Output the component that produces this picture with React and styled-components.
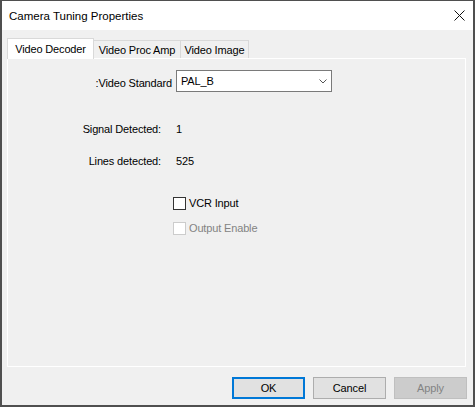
import React from 'react';
import styled, { createGlobalStyle } from 'styled-components';

const Global = createGlobalStyle`
  html, body { margin: 0; padding: 0; background: #4f4f4f; }
  body { width: 475px; height: 407px; overflow: hidden; }
  #root { width: 475px; height: 407px; }
`;

const Screen = styled.div`
  width: 475px;
  height: 407px;
  box-sizing: border-box;
  padding: 1px 2px 2px 2px;
  background: #4f4f4f;
  font-family: "Liberation Sans", Arial, sans-serif;
  font-size: 11px;
  letter-spacing: -0.15px;
  color: #000;
`;

const Window = styled.div`
  width: 471px;
  height: 404px;
  background: #f0f0f0;
  display: flex;
  flex-direction: column;
`;

const TitleBar = styled.div`
  height: 29px;
  flex-shrink: 0;
  background: #fff;
  display: flex;
  align-items: center;
  justify-content: space-between;
  padding: 0 8px 0 7px;
`;

const Title = styled.span`
  font-size: 11.5px;
  letter-spacing: 0;
  line-height: 14px;
`;

const CloseIcon = styled.svg`
  display: block;
  width: 11px;
  height: 11px;
`;

const Body = styled.div`
  flex: 1;
  display: flex;
  flex-direction: column;
  padding: 8px 7px 0 5px;
`;

const TabStrip = styled.div`
  display: flex;
  align-items: flex-end;
  height: 20px;
`;

const Tab = styled.div`
  box-sizing: border-box;
  width: ${p => p.$w}px;
  height: ${p => (p.$active ? 21 : 18)}px;
  margin-bottom: ${p => (p.$active ? -1 : 0)}px;
  margin-left: ${p => (p.$first ? 0 : -1)}px;
  padding-top: ${p => (p.$active ? 0 : 1)}px;
  background: ${p => (p.$active ? '#ffffff' : '#f0f0f0')};
  border: 1px solid #d9d9d9;
  border-bottom: none;
  display: flex;
  align-items: center;
  justify-content: center;
  line-height: 14px;
  white-space: nowrap;
  position: relative;
  z-index: ${p => (p.$active ? 2 : 1)};
`;

const Panel = styled.div`
  box-sizing: border-box;
  width: 459px;
  height: 309px;
  border: 1px solid #ffffff;
  background: #f0f0f0;
  padding-top: 11px;
  display: flex;
  flex-direction: column;
`;

const Row = styled.div`
  display: flex;
  align-items: flex-start;
  margin-top: ${p => p.$mt || 0}px;
`;

const Label = styled.div`
  box-sizing: border-box;
  width: ${p => p.$w}px;
  text-align: right;
  line-height: 14px;
  margin-top: ${p => p.$mt || 0}px;
  white-space: nowrap;
`;

const Value = styled.div`
  margin-left: ${p => p.$ml}px;
  line-height: 14px;
`;

const Combo = styled.div`
  box-sizing: border-box;
  margin-left: 4px;
  width: 156px;
  height: 22px;
  border: 1px solid #7a7a7a;
  background: #ffffff;
  display: flex;
  align-items: center;
  justify-content: space-between;
  padding: 0 4px 0 4px;
  line-height: 14px;
`;

const Chevron = styled.svg`
  display: block;
  width: 8px;
  height: 5px;
`;

const CheckRow = styled.label`
  display: flex;
  align-items: center;
  height: 13px;
  margin-left: 165px;
  margin-top: ${p => p.$mt}px;
  color: ${p => (p.$disabled ? '#838383' : '#000')};
  line-height: 13px;
`;

const Box = styled.span`
  box-sizing: border-box;
  width: 13px;
  height: 13px;
  border: 1px solid ${p => (p.$disabled ? '#cccccc' : '#333333')};
  background: #ffffff;
  margin-right: 3px;
  flex-shrink: 0;
`;

const ButtonRow = styled.div`
  display: flex;
  justify-content: flex-end;
  gap: 8px;
  margin-top: 10px;
  margin-right: -1px;
`;

const Button = styled.div`
  box-sizing: border-box;
  width: 73px;
  height: 22px;
  display: flex;
  align-items: center;
  justify-content: center;
  line-height: 14px;
  background: ${p => (p.$disabled ? '#cccccc' : '#e1e1e1')};
  border: ${p => (p.$default ? '2px solid #0078d7' : p.$disabled ? '1px solid #bfbfbf' : '1px solid #adadad')};
  color: ${p => (p.$disabled ? '#838383' : '#000')};
`;

export default function App() {
  return (
    <>
      <Global />
      <Screen>
        <Window>
          <TitleBar>
            <Title>Camera Tuning Properties</Title>
            <CloseIcon viewBox="0 0 11 11">
              <path d="M0.5 0.5 L10.5 10.5 M10.5 0.5 L0.5 10.5" stroke="#111" strokeWidth="1" fill="none" />
            </CloseIcon>
          </TitleBar>
          <Body>
            <TabStrip>
              <Tab $active $first $w={87}>Video Decoder</Tab>
              <Tab $w={88}>Video Proc Amp</Tab>
              <Tab $w={69}>Video Image</Tab>
            </TabStrip>
            <Panel>
              <Row>
                <Label $w={164} $mt={6}>:Video Standard</Label>
                <Combo>
                  <span>PAL_B</span>
                  <Chevron viewBox="0 0 8 5">
                    <path d="M0.5 0.5 L4 4 L7.5 0.5" stroke="#555" strokeWidth="1" fill="none" />
                  </Chevron>
                </Combo>
              </Row>
              <Row $mt={30}>
                <Label $w={153}>Signal Detected:</Label>
                <Value $ml={15}>1</Value>
              </Row>
              <Row $mt={18}>
                <Label $w={153}>Lines detected:</Label>
                <Value $ml={15}>525</Value>
              </Row>
              <CheckRow $mt={29}>
                <Box />
                VCR Input
              </CheckRow>
              <CheckRow $mt={12} $disabled>
                <Box $disabled />
                Output Enable
              </CheckRow>
            </Panel>
            <ButtonRow>
              <Button $default>OK</Button>
              <Button>Cancel</Button>
              <Button $disabled>Apply</Button>
            </ButtonRow>
          </Body>
        </Window>
      </Screen>
    </>
  );
}
